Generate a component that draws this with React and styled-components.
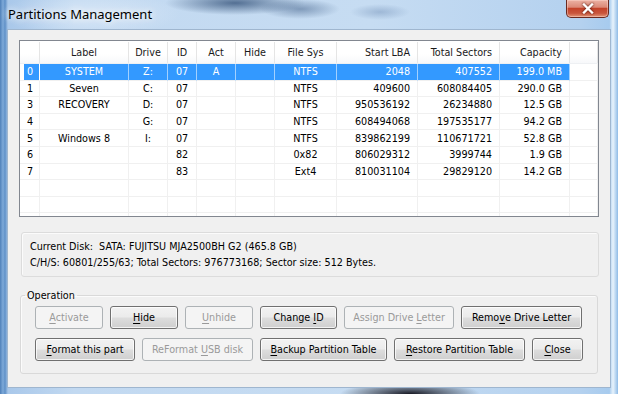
import React from "react";
import styled, { createGlobalStyle } from "styled-components";

const GlobalStyle = createGlobalStyle`
  html, body { margin: 0; padding: 0; width: 618px; height: 394px; overflow: hidden; }
  body { font-family: "DejaVu Sans Condensed", "Liberation Sans", sans-serif; }
  * { box-sizing: border-box; }
`;

const Window = styled.div`
  width: 618px;
  height: 394px;
  display: flex;
  flex-direction: column;
  background:
    radial-gradient(ellipse 70px 12px at 235px 3px, rgba(45, 75, 115, 0.75), transparent),
    radial-gradient(ellipse 40px 10px at 300px 9px, rgba(70, 100, 140, 0.55), transparent),
    radial-gradient(ellipse 30px 8px at 380px 12px, rgba(110, 140, 180, 0.45), transparent),
    radial-gradient(ellipse 70px 12px at 410px 394px, rgba(15, 15, 25, 0.95), transparent),
    radial-gradient(ellipse 90px 22px at 90px 14px, rgba(230, 240, 250, 0.6), transparent),
    linear-gradient(90deg, #4f80b9 0px, #7eaad9 3px, #5f90c7 5px, #a9c8ea 8px, #c2d9f1 12%, #c6dcf2 60%, #b4d1ef 94%, #a7cbee 98.6%, #e8f3fc 99.2%, #8fbbe6 100%);
`;

const TitleBar = styled.div`
  height: 29px;
  display: flex;
  align-items: flex-start;
  padding-left: 8px;
  padding-right: 8px;
`;

const Title = styled.div`
  padding-top: 6px;
  font-family: "Noto Sans", "Open Sans", sans-serif;
  font-size: 13px;
  line-height: 16px;
  color: #000;
  text-shadow: 0 0 6px rgba(255, 255, 255, 0.95), 0 0 10px rgba(255, 255, 255, 0.7);
`;

const CloseButton = styled.div`
  margin-left: auto;
  margin-right: 1px;
  width: 43px;
  height: 18px;
  border: 1px solid #6a2a20;
  border-top: none;
  border-radius: 0 0 5px 5px;
  background: linear-gradient(180deg, #ecb2a4 0%, #dc8a78 42%, #c4432a 50%, #c9563d 78%, #e39677 100%);
  box-shadow: inset 0 0 0 1px rgba(255, 220, 210, 0.45);
  display: flex;
  align-items: center;
  justify-content: center;
`;

const Client = styled.div`
  flex: 1;
  margin: 0 7px 6px 7px;
  background: #f0f0f0;
  border: 1px solid #9fb6cf;
  display: flex;
  flex-direction: column;
  padding: 10px 11px 0 11px;
`;

const ListView = styled.div`
  height: 177px;
  border: 1px solid #828790;
  background: #fff;
  overflow: hidden;
  font-size: 10.7px;
  color: #000;
`;

const COLS = "20px 89px 39px 29px 39px 39px 62px 81px 82px 70px 1fr";

const HeaderRow = styled.div`
  display: grid;
  grid-template-columns: ${COLS};
  height: 23px;
  padding-top: 1px;
  background: linear-gradient(180deg, #ffffff 0%, #ffffff 60%, #f7f8fa 100%);
  border-bottom: 1px solid #eef0f3;
`;

const HeaderCell = styled.div`
  display: flex;
  align-items: center;
  justify-content: ${(p) => (p.$align === "right" ? "flex-end" : p.$align === "left" ? "flex-start" : "center")};
  padding: 0 7px;
  border-right: 1px solid #e5e5e5;
  color: #1a1a1a;
  white-space: nowrap;
`;

const Row = styled.div`
  display: grid;
  grid-template-columns: ${COLS};
  height: 16.6px;
`;

const Cell = styled.div`
  display: flex;
  align-items: center;
  justify-content: ${(p) => (p.$align === "right" ? "flex-end" : p.$align === "left" ? "flex-start" : "center")};
  padding: 0 7px;
  white-space: nowrap;
  border-right: 1px solid ${(p) => (p.$sel ? "rgba(255,255,255,0.55)" : "#f0f0f0")};
  border-bottom: 1px solid #f0f0f0;
  color: ${(p) => (p.$sel ? "#fff" : "#000")};
  background: ${(p) =>
    p.$sel ? (p.$first ? "linear-gradient(90deg, #fff 4px, #3399ff 4px)" : "#3399ff") : "transparent"};
`;

const InfoBox = styled.div`
  margin-top: 15px;
  margin-left: 2px;
  height: 45px;
  border: 1px solid #dcdcdc;
  border-radius: 3px;
  box-shadow: inset 1px 1px 0 #fbfbfb;
  padding: 6px 8px 0 8px;
  font-size: 10.7px;
  line-height: 16px;
  color: #000;
`;

const InfoLine = styled.div`
  white-space: pre;
`;

const Group = styled.fieldset`
  margin: 12px 1px 0 1px;
  padding: 4px 0 0 14px;
  border: 1px solid #d9d9d9;
  border-radius: 3px;
  box-shadow: inset 1px 1px 0 #fbfbfb;
  height: 85px;
  min-inline-size: 0;
`;

const Legend = styled.legend`
  padding: 0 2px;
  margin-left: -10px;
  font-size: 10.7px;
  color: #000;
  line-height: 13px;
`;

const ButtonRow = styled.div`
  display: flex;
  gap: 7px;
  margin-bottom: 9px;
`;

const Button = styled.button`
  width: ${(p) => p.$w}px;
  height: 23px;
  padding: 0;
  font-family: "DejaVu Sans Condensed", "Liberation Sans", sans-serif;
  font-size: 10.7px;
  border-radius: 3px;
  border: 1px solid ${(p) => (p.disabled ? "#adb2b5" : "#707070")};
  color: ${(p) => (p.disabled ? "#9a9a9a" : "#000")};
  background: ${(p) =>
    p.disabled
      ? "#f4f4f4"
      : "linear-gradient(180deg, #f2f2f2 0%, #ebebeb 48%, #dddddd 52%, #cfcfcf 100%)"};
  box-shadow: ${(p) => (p.disabled ? "none" : "inset 0 0 0 1px rgba(255,255,255,0.75)")};
  white-space: nowrap;

  u { text-underline-offset: 2px; }
`;

const columns = [
  { h: "", a: "left" },
  { h: "Label", a: "center" },
  { h: "Drive", a: "center" },
  { h: "ID", a: "center" },
  { h: "Act", a: "center" },
  { h: "Hide", a: "center" },
  { h: "File Sys", a: "center" },
  { h: "Start LBA", a: "right" },
  { h: "Total Sectors", a: "right" },
  { h: "Capacity", a: "right" },
];

const rows = [
  ["0", "SYSTEM", "Z:", "07", "A", "", "NTFS", "2048", "407552", "199.0 MB"],
  ["1", "Seven", "C:", "07", "", "", "NTFS", "409600", "608084405", "290.0 GB"],
  ["3", "RECOVERY", "D:", "07", "", "", "NTFS", "950536192", "26234880", "12.5 GB"],
  ["4", "", "G:", "07", "", "", "NTFS", "608494068", "197535177", "94.2 GB"],
  ["5", "Windows 8", "I:", "07", "", "", "NTFS", "839862199", "110671721", "52.8 GB"],
  ["6", "", "", "82", "", "", "0x82", "806029312", "3999744", "1.9 GB"],
  ["7", "", "", "83", "", "", "Ext4", "810031104", "29829120", "14.2 GB"],
];

const emptyRows = [0, 1, 2];

function Label({ text, k }) {
  if (k < 0) return text;
  return (
    <>
      {text.slice(0, k)}
      <u>{text[k]}</u>
      {text.slice(k + 1)}
    </>
  );
}

const row1 = [
  { t: "Activate", k: 0, w: 68, d: true },
  { t: "Hide", k: 0, w: 68 },
  { t: "Unhide", k: 0, w: 68, d: true },
  { t: "Change ID", k: 7, w: 77 },
  { t: "Assign Drive Letter", k: 13, w: 110, d: true },
  { t: "Remove Drive Letter", k: 4, w: 121 },
];

const row2 = [
  { t: "Format this part", k: 0, w: 100 },
  { t: "ReFormat USB disk", k: 9, w: 111, d: true },
  { t: "Backup Partition Table", k: 0, w: 127 },
  { t: "Restore Partition Table", k: 0, w: 131 },
  { t: "Close", k: 0, w: 51 },
];

export default function App() {
  return (
    <>
      <GlobalStyle />
      <Window>
        <TitleBar>
          <Title>Partitions Management</Title>
          <CloseButton>
            <svg width="12" height="11" viewBox="0 0 12 11" style={{ filter: "drop-shadow(0 0 1px #4a1208)" }}>
              <path d="M2 1.5 L10 9.5 M10 1.5 L2 9.5" stroke="#fff" strokeWidth="2.4" strokeLinecap="square" />
            </svg>
          </CloseButton>
        </TitleBar>
        <Client>
          <ListView>
            <HeaderRow>
              {columns.map((c, i) => (
                <HeaderCell key={i} $align={c.a}>{c.h}</HeaderCell>
              ))}
              <HeaderCell />
            </HeaderRow>
            {rows.map((r, ri) => (
              <Row key={ri}>
                {r.map((v, ci) => (
                  <Cell key={ci} $align={columns[ci].a} $sel={ri === 0} $first={ci === 0}>
                    {v}
                  </Cell>
                ))}
                <Cell />
              </Row>
            ))}
            {emptyRows.map((e) => (
              <Row key={"e" + e}>
                {columns.map((c, ci) => (
                  <Cell key={ci} />
                ))}
                <Cell />
              </Row>
            ))}
          </ListView>
          <InfoBox>
            <InfoLine>Current Disk:  SATA: FUJITSU MJA2500BH G2 (465.8 GB)</InfoLine>
            <InfoLine>C/H/S: 60801/255/63; Total Sectors: 976773168; Sector size: 512 Bytes.</InfoLine>
          </InfoBox>
          <Group>
            <Legend>Operation</Legend>
            <ButtonRow>
              {row1.map((b) => (
                <Button key={b.t} $w={b.w} disabled={b.d}>
                  <Label text={b.t} k={b.k} />
                </Button>
              ))}
            </ButtonRow>
            <ButtonRow>
              {row2.map((b) => (
                <Button key={b.t} $w={b.w} disabled={b.d}>
                  <Label text={b.t} k={b.k} />
                </Button>
              ))}
            </ButtonRow>
          </Group>
        </Client>
      </Window>
    </>
  );
}
